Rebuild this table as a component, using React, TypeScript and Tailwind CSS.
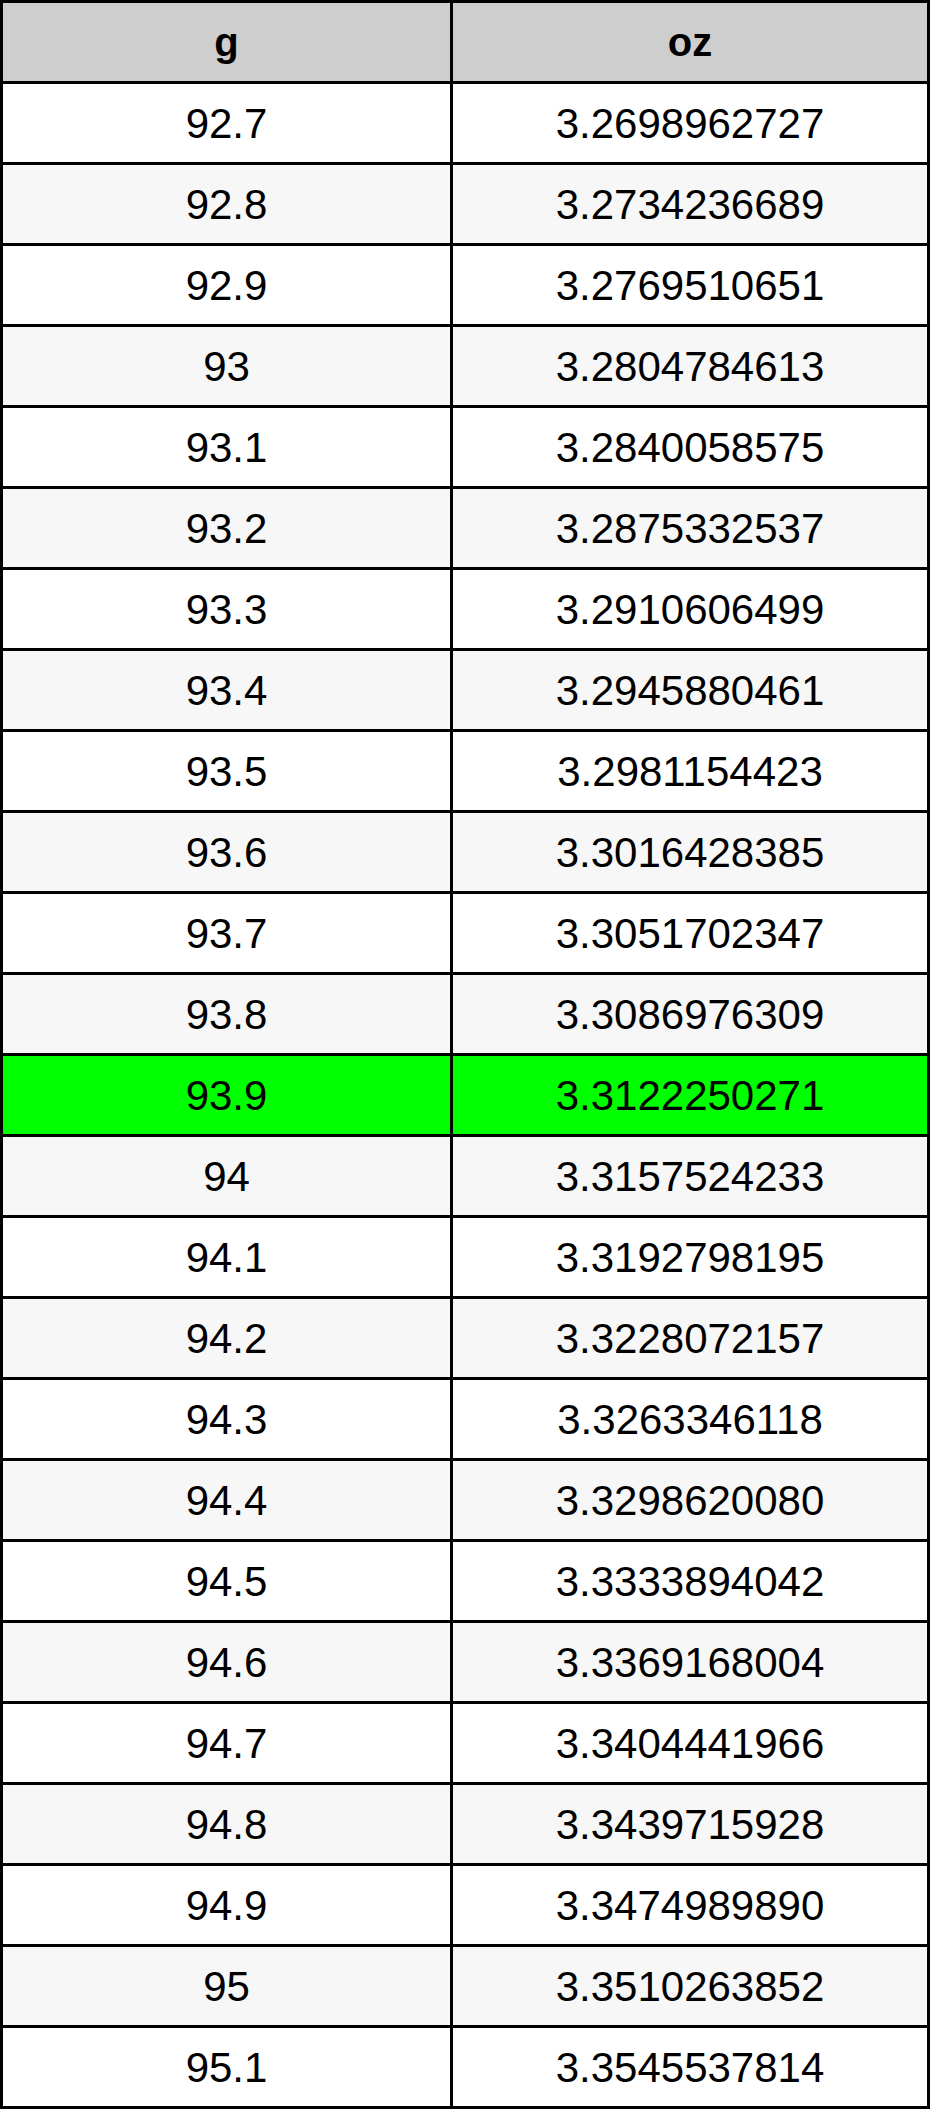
const rows: [string, string][] = [
  ["92.7", "3.2698962727"],
  ["92.8", "3.2734236689"],
  ["92.9", "3.2769510651"],
  ["93", "3.2804784613"],
  ["93.1", "3.2840058575"],
  ["93.2", "3.2875332537"],
  ["93.3", "3.2910606499"],
  ["93.4", "3.2945880461"],
  ["93.5", "3.2981154423"],
  ["93.6", "3.3016428385"],
  ["93.7", "3.3051702347"],
  ["93.8", "3.3086976309"],
  ["93.9", "3.3122250271"],
  ["94", "3.3157524233"],
  ["94.1", "3.3192798195"],
  ["94.2", "3.3228072157"],
  ["94.3", "3.3263346118"],
  ["94.4", "3.3298620080"],
  ["94.5", "3.3333894042"],
  ["94.6", "3.3369168004"],
  ["94.7", "3.3404441966"],
  ["94.8", "3.3439715928"],
  ["94.9", "3.3474989890"],
  ["95", "3.3510263852"],
  ["95.1", "3.3545537814"],
];

const highlighted = "93.9";

export default function App() {
  return (
    <div className="w-[930px] bg-white font-['Liberation_Sans',Arial,sans-serif] text-[42px] text-black">
      <div className="flex flex-col border-[3px] border-black">
        <div className="flex h-[81px] border-b-[3px] border-black bg-[#cecece] text-[40px] font-bold">
          <div className="flex w-[450px] items-center justify-center border-r-[3px] border-black">g</div>
          <div className="flex flex-1 items-center justify-center">oz</div>
        </div>
        {rows.map(([g, oz], i) => {
          const bg = g === highlighted ? "bg-[#00ff00]" : i % 2 === 0 ? "bg-white" : "bg-[#f7f7f7]";
          const last = i === rows.length - 1;
          return (
            <div
              key={g}
              className={`flex ${last ? "h-[78px]" : "h-[81px] border-b-[3px] border-black"} ${bg}`}
            >
              <div className="flex w-[450px] items-center justify-center border-r-[3px] border-black">{g}</div>
              <div className="flex flex-1 items-center justify-center">{oz}</div>
            </div>
          );
        })}
      </div>
    </div>
  );
}
